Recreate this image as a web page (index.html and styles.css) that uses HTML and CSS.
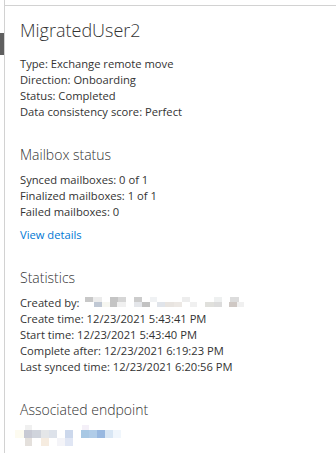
FILE: index.html
```html
<!DOCTYPE html>
<html lang="en">
<head>
    <meta charset="UTF-8">
    <title>Migration batch details</title>
    <link rel="stylesheet" href="styles.css">
</head>
<body>

    <div class="panel">
        <div class="tab-marker"></div>
        <div class="content">
            <h1 class="title">MigratedUser2</h1>

            <div class="lines">
                <div>Type: Exchange remote move</div>
                <div>Direction: Onboarding</div>
                <div>Status: Completed</div>
                <div>Data consistency score: Perfect</div>
            </div>

            <!-- Mailbox status -->
            <h2 class="section-title">Mailbox status</h2>
            <div class="lines">
                <div>Synced mailboxes: 0 of 1</div>
                <div>Finalized mailboxes: 1 of 1</div>
                <div>Failed mailboxes: 0</div>
            </div>
            <a class="link" href="#">View details</a>

            <!-- Statistics -->
            <h2 class="section-title">Statistics</h2>
            <div class="lines">
                <div>Created by: <span class="blur blur-user"><span class="row r1"></span><span class="row r2"></span></span></div>
                <div>Create time: 12/23/2021 5:43:41 PM</div>
                <div>Start time: 12/23/2021 5:43:40 PM</div>
                <div>Complete after: 12/23/2021 6:19:23 PM</div>
                <div>Last synced time: 12/23/2021 6:20:56 PM</div>
            </div>

            <!-- Endpoint -->
            <h2 class="section-title">Associated endpoint</h2>
            <div class="blur blur-endpoint">
                <span class="row e1"></span>
                <span class="row e2"></span>
                <span class="row e3"></span>
            </div>
        </div>
    </div>

</body>
</html>
```

FILE: styles.css
```css
body {
    margin: 0;
    font-family: "Open Sans", "Noto Sans", sans-serif;
    background: #fff;
    color: #333;
}

.panel {
    margin-left: 4px;
    border-left: 1px solid #d2d2d2;
    min-height: 100vh;
    padding-top: 5px;
    box-sizing: border-box;
}

.tab-marker {
    position: absolute;
    left: 0;
    top: 33px;
    width: 4px;
    height: 22px;
    background: #5f5f5f;
}

.content {
    border-top: 1px solid #d2d2d2;
    padding: 10px 0 0 15px;
}

.title {
    margin: 0;
    font-size: 18px;
    font-weight: 300;
    line-height: 28px;
    color: #333;
}

.lines {
    margin-top: 12px;
    font-size: 11.2px;
    line-height: 16px;
}

.section-title {
    margin: 24px 0 0;
    font-size: 14px;
    font-weight: 300;
    line-height: 22px;
}

.section-title + .lines {
    margin-top: 6px;
}

.link {
    display: block;
    margin-top: 7px;
    font-size: 11.2px;
    line-height: 16px;
    color: #0078d4;
    text-decoration: none;
}

/* redacted values */
.blur {
    display: inline-flex;
    flex-direction: column;
    vertical-align: top;
}

.blur-user {
    margin: 2px 0 0 3px;
}

.blur-endpoint {
    display: flex;
    margin: 4px 0 0 -5px;
}

.row {
    display: block;
    height: 5px;
}

.r1 {
    width: 160px;
    background: linear-gradient(to right,
        #c8c8c8 0 8px, #ececec 8px 17px, #fff 17px 25px, #c4c4c4 25px 33px,
        #d6d6d6 33px 41px, #fff 41px 49px, #cccccc 49px 57px, #fff 57px 65px,
        #f0f2f4 65px 72px, #fff 72px 97px, #ededed 97px 105px, #fff 105px 129px,
        #eef0f0 129px 137px, #fff 137px 145px, #dcdcdc 145px 154px, #fff 154px);
}

.r2 {
    width: 160px;
    background: linear-gradient(to right,
        #fff 0 9px, #c0c8d4 9px 17px, #f6f6f0 17px 25px, #c4c4c4 25px 32px,
        #f0f0f0 32px 41px, #fff 41px 49px, #e4e6ea 49px 57px, #c2c2c2 57px 65px,
        #fff 65px 72px, #e0e4ea 72px 80px, #e8e4e0 80px 89px, #ece8e4 89px 97px,
        #fff 97px 105px, #f0f0f0 105px 112px, #fff 112px 120px, #e0e0dc 120px 129px,
        #dcdcdc 129px 137px, #fff 137px 144px, #cfc8c4 144px 152px, #f0f0f0 152px 159px, #fff 159px);
}

.e1,
.e2,
.e3 {
    width: 110px;
}

.e1 {
    background: linear-gradient(to right,
        #fff 0 10px, #f0f0f0 10px 17px, #fff 17px 67px, #f4f0f8 67px 74px, #fff 74px);
}

.e2 {
    height: 8px;
    background: linear-gradient(to right,
        #fdfbf0 0 9px, #c8cad4 9px 17px, #d0d4dc 17px 26px, #e4e6e8 26px 34px,
        #dde2ea 34px 42px, #fff 42px 50px, #ccd8ec 50px 58px, #fff 58px 66px,
        #a8c8e4 66px 74px, #b0cce8 74px 82px, #98b8e0 82px 90px, #d8e6f4 90px 98px,
        #f0f6fc 98px 106px, #fff 106px);
}

.e3 {
    height: 8px;
    background: linear-gradient(to right,
        #fff 0 10px, #e4e0dc 10px 17px, #fff 17px 26px, #f6ece0 26px 34px,
        #fff 34px 42px, #f4f4f8 42px 50px, #e0e6f4 50px 58px, #fff 58px);
}
```
